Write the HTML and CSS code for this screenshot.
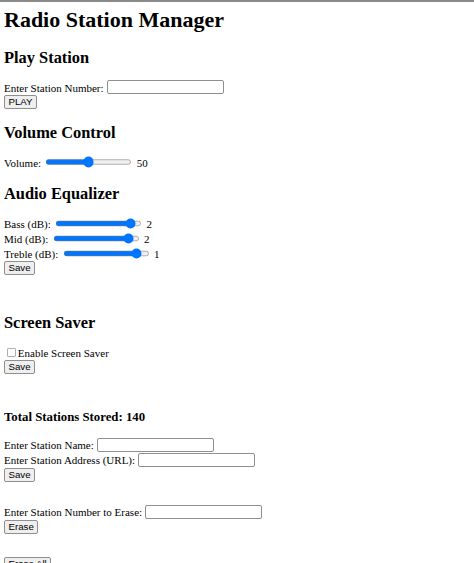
FILE: index.html
```html
<!DOCTYPE html>
<html>
<head>
<meta charset="utf-8">
<title>Radio Station Manager</title>
<link rel="stylesheet" href="styles.css">
</head>
<body>
<div class="topbar"></div>
<main class="page">
  <h1 class="title">Radio Station Manager</h1>

  <h2 class="heading heading-first">Play Station</h2>
  <div class="row row-lead"><span class="txt">Enter Station Number:</span><input type="text" class="field"></div>
  <button class="btn">PLAY</button>

  <h2 class="heading">Volume Control</h2>
  <div class="row row-lead slider-row"><span class="txt">Volume:</span><input type="range" class="slider" min="0" max="100" value="50"><span class="txt">50</span></div>

  <h2 class="heading">Audio Equalizer</h2>
  <div class="row row-lead slider-row row-eq"><span class="txt">Bass (dB):</span><input type="range" class="slider" min="0" max="100" value="92"><span class="txt">2</span></div>
  <div class="row slider-row"><span class="txt">Mid (dB):</span><input type="range" class="slider" min="0" max="100" value="92"><span class="txt">2</span></div>
  <div class="row slider-row"><span class="txt">Treble (dB):</span><input type="range" class="slider" min="0" max="100" value="90"><span class="txt">1</span></div>
  <button class="btn btn-flush">Save</button>

  <h2 class="heading heading-far">Screen Saver</h2>
  <label class="row row-lead row-check"><input type="checkbox" class="check"><span class="txt">Enable Screen Saver</span></label>
  <button class="btn btn-flush">Save</button>

  <h3 class="subheading">Total Stations Stored: 140</h3>
  <div class="row row-lead"><span class="txt">Enter Station Name:</span><input type="text" class="field"></div>
  <div class="row"><span class="txt">Enter Station Address (URL):</span><input type="text" class="field"></div>
  <button class="btn">Save</button>

  <div class="row row-far"><span class="txt">Enter Station Number to Erase:</span><input type="text" class="field"></div>
  <button class="btn">Erase</button>

  <button class="btn btn-far">Erase All</button>
</main>
</body>
</html>
```

FILE: styles.css
```css
html, body {
  margin: 0;
  padding: 0;
  background: #ffffff;
}
body {
  font-family: "Liberation Serif", "Times New Roman", serif;
  font-size: 11px;
  color: #000000;
}
.topbar {
  height: 2px;
  background: #8a8a8a;
}
.page {
  display: flex;
  flex-direction: column;
  align-items: flex-start;
  padding: 0 4px 0 4px;
}
.title {
  font-size: 22px;
  line-height: 25px;
  font-weight: bold;
  margin: 5px 0 0 0;
}
.heading {
  font-size: 16.4px;
  line-height: 19px;
  font-weight: bold;
  margin: 14px 0 0 0;
}
.heading-first {
  margin-top: 16px;
}
.heading-far {
  margin-top: 38.3px;
}
.subheading {
  font-size: 12.8px;
  line-height: 15px;
  font-weight: bold;
  margin: 36px 0 0 0;
}
.row {
  display: flex;
  align-items: center;
  height: 15px;
  gap: 3px;
  margin: 0;
}
.row-lead {
  margin-top: 12.5px;
}
.row-eq {
  margin-top: 13.5px;
}
.row-far {
  margin-top: 22.5px;
}
.row-check {
  gap: 0;
}
.txt {
  line-height: 15px;
  padding-top: 2px;
  white-space: nowrap;
}
.field {
  box-sizing: border-box;
  width: 117px;
  height: 14px;
  margin: 0;
  padding: 0 2px;
  border: 1px solid #8f8f8f;
  border-radius: 2px;
  background: #ffffff;
  font-family: "Liberation Sans", Arial, sans-serif;
  font-size: 9px;
}
.slider {
  zoom: 0.69;
  width: 126px;
}
.check {
  zoom: 0.69;
  margin: 3px 3px 3px 4px;
}
.btn {
  box-sizing: border-box;
  height: 14px;
  margin: 0.5px 0 0 0;
  padding: 0 3.5px;
  border: 1px solid #8f8f8f;
  border-radius: 2px;
  background: #efefef;
  color: #000000;
  font-family: "Liberation Sans", Arial, sans-serif;
  font-size: 9.7px;
  line-height: 12px;
}
.btn-flush {
  margin-top: 0;
}
.btn-far {
  margin-top: 23.7px;
}
```
